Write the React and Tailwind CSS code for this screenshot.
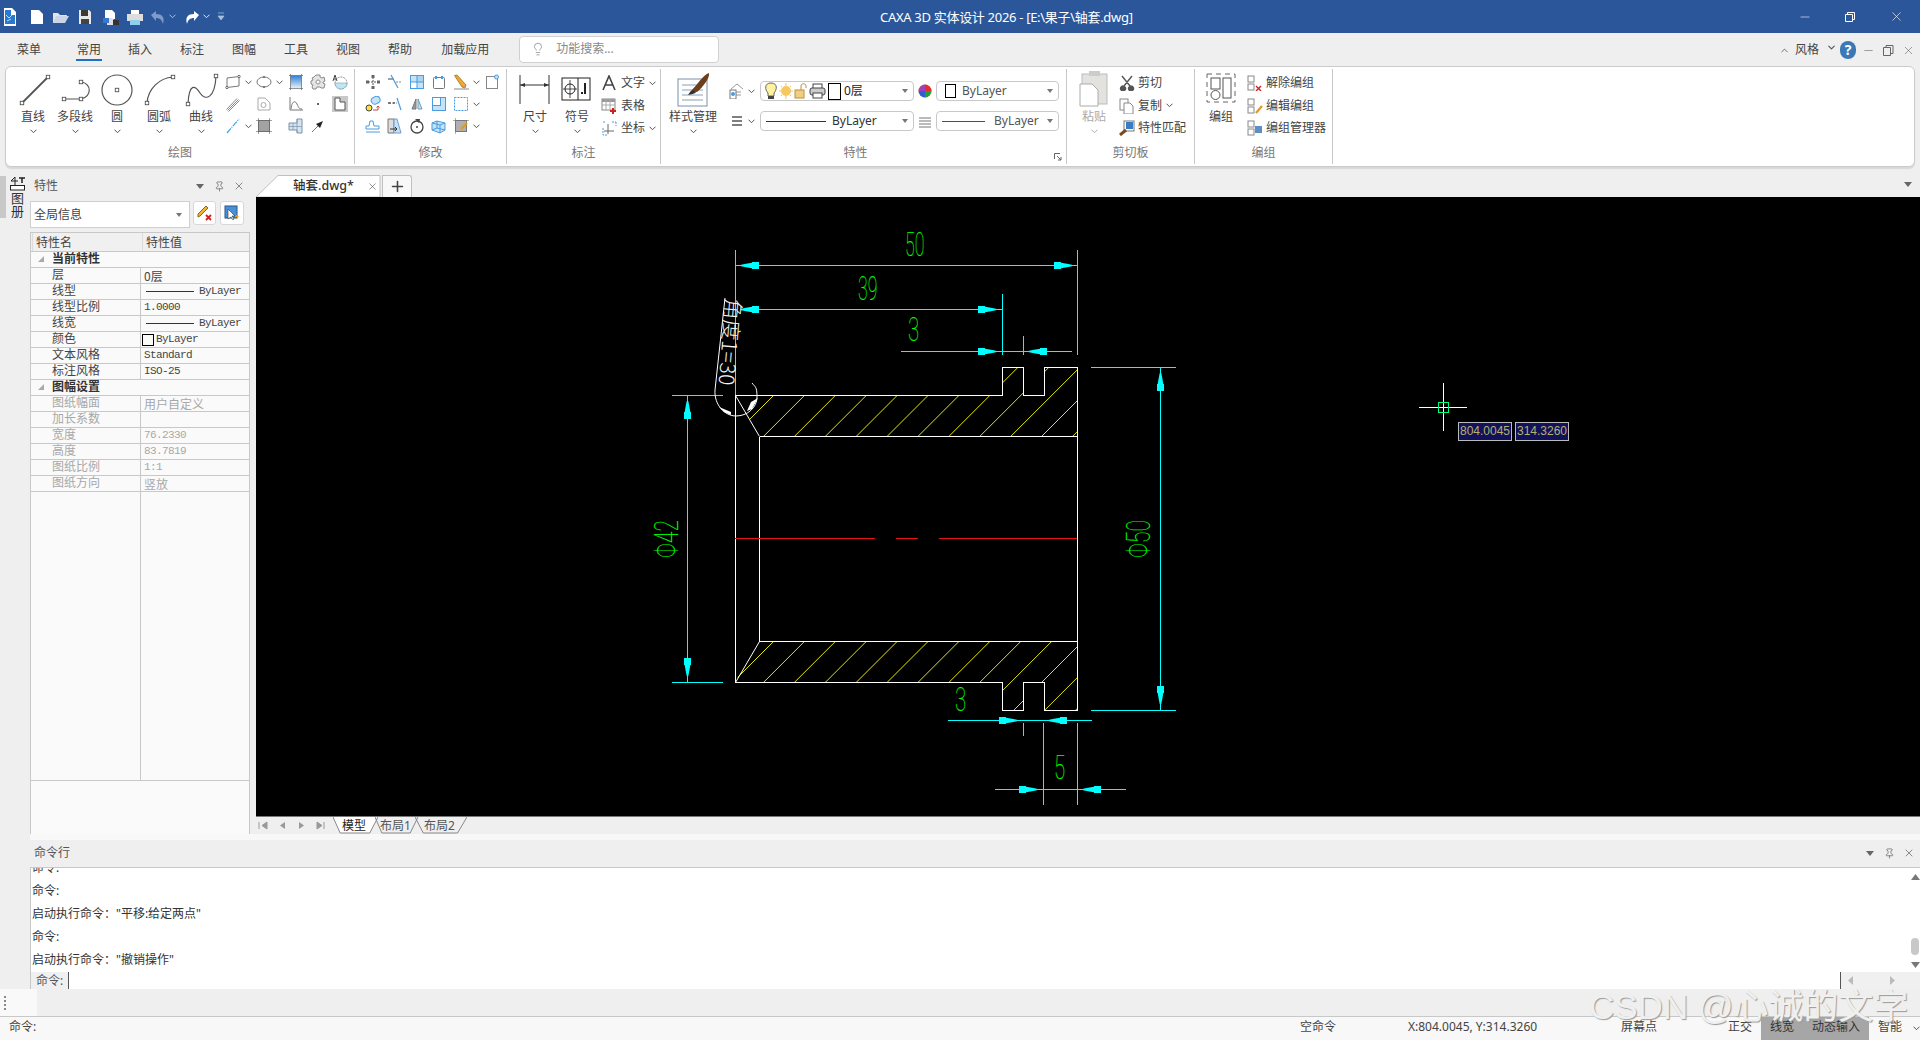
import { X, Minus, ChevronDown, ChevronUp, Pin, Plus, Lightbulb } from "lucide-react";

const DARK = "#555";
const BLUE = "#4a9be0";
const LB = "#c5e3f6";

function Chev({ className = "", color = "#555" }) {
  return (
    <svg width="7" height="5" viewBox="0 0 7 5" className={`shrink-0 ${className}`}>
      <path d="M.5 .7 3.5 3.7 6.5 .7" fill="none" stroke={color} />
    </svg>
  );
}

function S({ children, w = 16, h = 16, className = "" }) {
  return (
    <svg width={w} height={h} viewBox={`0 0 ${w} ${h}`} className={`shrink-0 ${className}`}>
      {children}
    </svg>
  );
}

const H = ({ x, y, s = 3 }) => <rect x={x - s / 2} y={y - s / 2} width={s} height={s} fill="#fff" stroke="#444" strokeWidth=".8" />;

// small ribbon icons
const ic = {
  rect: <><path d="M2 4 14 2.500V12L2 13.500Z" fill="none" stroke="#777" /><circle cx="2" cy="13.500" r="1.200" fill="#fff" stroke="#666" /><circle cx="14" cy="2.500" r="1.200" fill="#fff" stroke="#666" /></>,
  ellipse: <><ellipse cx="8" cy="8" rx="7" ry="5" fill="none" stroke="#777" /><circle cx="8" cy="3" r="1" fill="#666" /><circle cx="8" cy="13" r="1" fill="#666" /></>,
  hatch: <><defs><linearGradient id="hg" x1="0" y1="0" x2="0" y2="1"><stop offset="0" stopColor="#2f7fd6" /><stop offset="1" stopColor="#e8f3fb" /></linearGradient></defs><rect x="2.500" y="1.500" width="11" height="13" fill="url(#hg)" /><path d="M1 1.500h14M1 14.500h14M2.500 0v16M13.500 0v16" stroke="#666" strokeWidth=".7" /></>,
  gear: <path d="M6 1h4v2l2 1 2-1 1 4-2 1v1l2 1-1 4h-3l-1-1H7l-1 2H3l-1-2 1-2-2-1V7l2-1-1-2 2-1zM8 6a2 2 0 1 0 .1 0" fill="#e2e4e8" stroke="#8a8a8a" fillRule="evenodd" />,
  atext: <><circle cx="9" cy="9" r="6" fill="#fff" stroke="#888" strokeDasharray="2 1" /><path d="M9 9h6A6 6 0 0 1 3 9z" fill={LB} stroke="#6aa" strokeWidth=".6" /><path d="M1 7 3 1l2 6M2 5h2" fill="none" stroke="#444" /></>,
  dbl: <path d="M1.500 13.500 12 2.500M3.500 15.500 14.500 4.500M2.500 14.500 13.500 3.500" stroke="#888" strokeWidth="1" />,
  shape: <><path d="M2 2h7l5 5v7H2z" fill="#fff" stroke="#aaa" /><circle cx="7.500" cy="9" r="2.500" fill="none" stroke="#aaa" /></>,
  curve: <path d="M2 1v13h13M3 13c1-8 4-9 6-5s2 5 5 5" fill="none" stroke="#777" />,
  dot: <rect x="7" y="7" width="2" height="2" fill="#666" />,
  page: <><rect width="16" height="16" fill="#c8c8c8" /><path d="M3 2h5v4h5v8H3z" fill="#fff" stroke="#555" /></>,
  cline: <path d="M2 15 14 1" stroke="#38a8ec" strokeWidth="1.2" strokeDasharray="6 1 1 1" />,
  ghatch: <><rect x="2.500" y="2.500" width="11" height="11" fill="#a2a2a2" stroke="#777" /><path d="M0 2.500h16M0 13.500h16M2.500 0v16M13.500 0v16" stroke="#666" strokeWidth=".6" /></>,
  block: <><path d="M1 5h8V1h5v14H9v-3H1z" fill="#d5e4f1" stroke="#7f92a8" /><path d="M1 8.500h13M5 5v7M9 1v14" stroke="#7f92a8" strokeWidth=".7" /></>,
  pick: <><path d="M2 14 8 8" stroke="#777" /><path d="M13 3 6 6l4 4z" fill="#222" /></>,
  move: <><path d="M8 3v10M3 8h10" stroke="#555" strokeDasharray="2 1" /><rect x="6.500" y="1" width="3" height="3" fill="#666" /><rect x="6.500" y="12" width="3" height="3" fill="#666" /><rect x="1" y="6.500" width="3" height="3" fill="#666" /><rect x="12" y="6.500" width="3" height="3" fill="#666" /></>,
  trim: <><path d="M1 5h6" stroke="#444" /><path d="M9 8h6" stroke="#888" strokeDasharray="2 1" /><path d="M4 1 11 14" stroke={BLUE} strokeWidth="1.2" /></>,
  tiles: <><rect x="1.500" y="1.500" width="13" height="13" fill={LB} stroke={BLUE} /><rect x="1.500" y="8" width="6.500" height="6.500" fill="#fff" stroke={BLUE} /><rect x="8" y="1.500" width="6.500" height="6.500" fill="#a9d3f0" stroke={BLUE} /></>,
  ticks: <><rect x="2.500" y="3.500" width="11" height="11" rx="1" fill="#fff" stroke="#777" /><path d="M5 2v3M11 2v3" stroke={BLUE} strokeWidth="2" /></>,
  pencil: <><path d="M1.500 1.500 4 1l9 10-1 3-3-1z" fill="#f2a830" stroke="#9a7015" strokeWidth=".8" /><path d="M10 13l2 1 1-3z" fill="#d88" /><path d="M1 15h15" stroke="#888" /></>,
  note: <><rect x="2.500" y="2.500" width="11" height="12" fill="#fff" stroke="#888" /><circle cx="12.500" cy="3" r="2" fill={LB} stroke={BLUE} /></>,
  circles: <><rect x="6" y="1" width="9" height="7" rx="3.500" transform="rotate(-25 10 4)" fill={LB} stroke={BLUE} /><circle cx="4" cy="12" r="3" fill="#ffe040" stroke="#444" /><path d="M8 14h5V10M11.500 11.500 13 10l1.500 1.500" fill="none" stroke="#c44" /></>,
  cut: <><path d="M1 7h3M6 7h2" stroke="#444" strokeWidth="1.3" /><path d="M10 2 14 14" stroke={BLUE} strokeWidth="1.2" /><path d="M1 7h9" stroke="#888" strokeDasharray="1 1" /></>,
  mirror: <><path d="M7 3v10H3z" fill="#999" stroke="#777" /><path d="M9 3v10h4z" fill={LB} stroke="#69b" /></>,
  half: <><rect x="1.500" y="1.500" width="13" height="13" fill={LB} stroke={BLUE} /><rect x="1.500" y="1.500" width="8" height="8" fill="#fff" stroke={BLUE} /></>,
  dash: <rect x="1.500" y="1.500" width="13" height="13" fill="#fff" stroke={BLUE} strokeDasharray="2 1" />,
  wave: <path d="M1 11h13V8H9L8 3H5L4 8H1zM1 14h14" fill="none" stroke={BLUE} />,
  para: <><path d="M7 1v14H1V1z" fill="#ddd" stroke="#777" /><path d="M7 1h3l4 14H7z" fill={LB} stroke="#79c" /><path d="M3 11h7M8 9l2 2-2 2" fill="none" stroke="#333" /></>,
  rot: <><circle cx="8" cy="9" r="6" fill="none" stroke="#444" strokeWidth="1.3" /><path d="M6 1h5l-1 4z" fill="#444" /><circle cx="8" cy="9" r="1" fill="#444" /></>,
  cube: <><path d="M1 5 6 3l8 2v7l-5 3-8-3z" fill={LB} stroke={BLUE} /><path d="M6 3v7l-5 2M6 10l8 2M9 7v8M1 5l8 2 5-2" stroke={BLUE} fill="none" /></>,
  gpen: <><rect x="2.500" y="2.500" width="11" height="11" fill="#b0b0b0" stroke="#777" /><path d="M0 2.500h16M2.500 0v16" stroke="#777" strokeWidth=".6" /><path d="M8 11 14 5" stroke="#e09a20" strokeWidth="2.200" /></>,
};

function I({ k, chev }) {
  return (
    <div className="h-[22px] flex items-center gap-[4px]">
      <S>{ic[k]}</S>
      {chev && <Chev />}
    </div>
  );
}

function LargeTool({ label, width = "w-[42px]", children, chev = true, disabled }) {
  return (
    <div className={`${width} flex flex-col items-center shrink-0`}>
      <svg width="36" height="36" viewBox="0 0 36 36" className="mt-[2px]">{children}</svg>
      <span className={`mt-[2px] leading-[16px] whitespace-nowrap ${disabled ? "text-[#aaa]" : ""}`}>{label}</span>
      {chev && <Chev className="mt-[4px]" color={disabled ? "#aaa" : "#555"} />}
    </div>
  );
}

function Group({ label, width, children, corner, labelClass = "" }) {
  return (
    <div className={`${width} relative shrink-0 flex flex-col border-r border-[#c8c8c8]`}>
      <div className="h-[74px] flex">{children}</div>
      <div className={`h-[20px] flex items-center justify-center text-[#777] ${labelClass}`}>{label}</div>
      {corner && (
        <S w={8} h={8} className="absolute right-[4px] bottom-[3px]">
          <path d="M.5 6V.5H6M3 3l4 4M7 4v3H4" fill="none" stroke="#666" />
        </S>
      )}
    </div>
  );
}

function Combo({ width, children }) {
  return (
    <div className={`${width} h-[20px] shrink-0 flex items-center bg-white border border-[#c8c8c8] rounded-[4px] pr-[5px]`}>
      {children}
      <svg width="6" height="4" viewBox="0 0 6 4" className="ml-auto"><path d="M0 0h6L3 4z" fill="#777" /></svg>
    </div>
  );
}

function LabelItem({ icon, label, chev }) {
  return (
    <div className="h-[22.5px] flex items-center gap-[2px]">
      <S w={18}>{icon}</S>
      <span className="whitespace-nowrap">{label}</span>
      {chev && <Chev className="ml-[2px]" />}
    </div>
  );
}

function Ribbon() {
  return (
    <div className="h-[101px] mx-[5px] bg-white border border-[#cbcbcb] rounded-[6px] shadow-[0_2px_1px_#d8d8d8] py-[2px] flex shrink-0 text-[12px] text-[#444]">
      <Group label="绘图" width="w-[349px]">
        <div className="w-[6px]" />
        <LargeTool label="直线"><path d="M7 32 33 6" stroke={DARK} strokeWidth="1.8" /><H x={7} y={32} s={3.5} /><H x={33} y={6} s={3.5} /></LargeTool>
        <LargeTool label="多段线"><path d="M7 28H24M24 28C35 26 35 12 24 11" fill="none" stroke={DARK} strokeWidth="1.2" /><H x={7} y={28} s={3.5} /><H x={24} y={28} s={3.5} /><H x={24} y={11} s={3.5} /></LargeTool>
        <LargeTool label="圆"><circle cx="18" cy="19" r="15" fill="none" stroke={DARK} strokeWidth="1.2" /><H x={18} y={19} s={3.5} /></LargeTool>
        <LargeTool label="圆弧"><path d="M6 32C7 18 18 7 32 6" fill="none" stroke={DARK} strokeWidth="1.2" /><H x={6} y={32} s={3.5} /><H x={32} y={6} s={3.5} /></LargeTool>
        <LargeTool label="曲线"><path d="M5 33C6 12 12 14 17 22S32 28 33 5" fill="none" stroke={DARK} strokeWidth="1.2" /><H x={5} y={33} s={3.5} /><H x={33} y={5} s={3.5} /></LargeTool>
        <div className="grid grid-cols-[28px_35px_22px_22px_22px] grid-rows-[22px_22px_22px] pl-[3px] mt-[2px] h-[68px]">
          {[["rect", 1], ["ellipse", 1], ["hatch"], ["gear"], ["atext"], ["dbl"], ["shape"], ["curve"], ["dot"], ["page"], ["cline", 1], ["ghatch"], ["block"], ["pick"]].map(([k, c], i) => (
            <div key={i} className={i === 1 || i === 6 || i === 11 ? "pl-[3px]" : ""}><I k={k} chev={c} /></div>
          ))}
        </div>
      </Group>
      <Group label="修改" width="w-[152px]">
        <div className="grid grid-cols-[22px_22px_22px_22px_31px_22px] grid-rows-[22px_22px_22px] pl-[10px] mt-[2px] h-[68px]">
          {[["move"], ["trim"], ["tiles"], ["ticks"], ["pencil", 1], ["note"], ["circles"], ["cut"], ["mirror"], ["half"], ["dash", 1], [], ["wave"], ["para"], ["rot"], ["cube"], ["gpen", 1]].map(([k, c], i) => (k ? <I key={i} k={k} chev={c} /> : <div key={i} />))}
        </div>
      </Group>
      <Group label="标注" width="w-[154px]">
        <div className="w-[7px]" />
        <LargeTool label="尺寸"><path d="M3 4v29M32 4v29M3 14h29" stroke="#333" fill="none" /><path d="M3 14l5-2v4zM32 14l-5-2v4z" fill="#333" /></LargeTool>
        <LargeTool label="符号"><rect x="3" y="7" width="28" height="22" fill="#fff" stroke="#222" /><path d="M19 7v22" stroke="#222" /><circle cx="11" cy="18" r="5" fill="none" stroke="#222" /><path d="M11 9v18M4 18h14" stroke="#222" strokeWidth=".8" /><path d="M22 22h2M26 12v11" stroke="#222" strokeWidth="2" /></LargeTool>
        <div className="ml-[3px] mt-[3px] flex flex-col">
          <LabelItem label="文字" chev icon={<path d="M2 15 8 1l6 14M4 10h8" fill="none" stroke="#444" strokeWidth="1.6" />} />
          <LabelItem label="表格" icon={<><rect x="1" y="1" width="13" height="11" fill="#fff" stroke="#888" /><rect x="1" y="1" width="13" height="3" fill="#999" /><path d="M5 1v11M9 1v11M1 7h13" stroke="#aaa" /><path d="M12 10v6M9 13h6" stroke="#d02020" strokeWidth="2" /></>} />
          <LabelItem label="坐标" chev icon={<><path d="M7 4v10M3 11h10" stroke="#666" fill="none" /><path d="M2 8v7h5M11 2h4M2 2h3M15 2v4" stroke={BLUE} fill="none" strokeDasharray="2 1" /></>} />
        </div>
      </Group>
      <Group label="特性" width="w-[406px]" corner labelClass="pr-[16px]">
        <div className="w-[11px]" />
        <LargeTool label="样式管理">
          <rect x="3" y="8" width="29" height="27" fill="#fff" stroke="#7c8fa8" />
          <path d="M7 14h21M7 19h21M7 24h21M7 29h21" stroke="#8aa0b8" />
          <path d="M16 20C22 14 28 4 34 2c1 5-6 14-12 19z" fill="#6b3f1c" />
          <path d="M15 21c2-2 5-1 6 0-1 2-5 2-8 3z" fill="#333" />
        </LargeTool>
        <div className="ml-[14px] flex flex-col">
          <div className="flex items-center h-[20px] mt-[12px]">
            <S w={18}><path d="M3 6 9 1l6 5M5 9h8M6 12h7" stroke="#999" fill="none" /><rect x="2" y="7" width="6" height="9" fill="#fff" stroke="#777" /><circle cx="5" cy="11" r="2" fill={BLUE} /></S>
            <Chev className="ml-[2px] mr-[5px]" />
            <Combo width="w-[154px]">
              <div className="pl-[3px] flex items-center gap-[1px] h-full">
                <S w={14} h={18}><path d="M7 1c-7 0-6 7-3 10v3h6v-3c3-3 4-10-3-10z" fill="#fff2a0" stroke="#666" /><rect x="4" y="14" width="6" height="3" fill="#444" /></S>
                <S w={14} h={16}><circle cx="7" cy="8" r="5" fill="#f8c860" /><path d="M7 0v3M7 13v3M0 8h2M12 8h2M2 3l1 1M11 12l1 1M12 3l-1 1M3 12l-1 1" stroke="#f0c060" /></S>
                <S w={14}><rect x="1" y="7" width="9" height="8" fill="#f0d080" stroke="#b89040" /><path d="M7 7V3c0-3 5-3 5 0v2" fill="none" stroke="#b89040" /></S>
                <S w={17}><rect x="4" y="1" width="9" height="5" fill="#fff" stroke="#444" /><rect x="1" y="5" width="15" height="7" rx="2" fill="#ccc" stroke="#444" /><rect x="4" y="10" width="9" height="5" fill="#fff" stroke="#444" /></S>
                <div className="w-[13px] h-[17px] border border-black bg-white ml-[1px]" />
                <span className="ml-[2px] text-[#222]">0层</span>
              </div>
            </Combo>
            <S w={14} h={18} className="mx-[4px]"><circle cx="7" cy="9" r="6.5" fill="#f0b000" /><path d="M7 9V2.500A6.500 6.500 0 0 1 13.500 9z" fill="#e03030" /><path d="M7 9h6.500A6.500 6.500 0 0 1 7 15.500z" fill="#20a040" /><path d="M7 9v6.500A6.500 6.500 0 0 1 .5 9z" fill="#3060d0" /><path d="M7 9H.5A6.500 6.500 0 0 1 7 2.500z" fill="#a040c0" /></S>
            <Combo width="w-[123px]">
              <div className="w-[11px] h-[14px] border border-black bg-white ml-[8px]" />
              <span className="ml-[6px] text-[#555]">ByLayer</span>
            </Combo>
          </div>
          <div className="flex items-center h-[20px] mt-[10px]">
            <S w={18}><path d="M4 4h10M4 8h10M4 12h10" stroke="#555" strokeWidth="1.5" /></S>
            <Chev className="ml-[2px] mr-[5px]" />
            <Combo width="w-[154px]">
              <div className="w-[60px] h-px bg-[#333] ml-[5px]" />
              <span className="ml-[6px] text-[#333]">ByLayer</span>
            </Combo>
            <S w={14} h={18} className="mx-[4px]"><path d="M1 6h12M1 9h12M1 12h12M1 15h12" stroke="#777" /></S>
            <Combo width="w-[123px]">
              <div className="w-[43px] h-px bg-[#e01010] ml-[5px]" />
              <span className="ml-[9px] text-[#555]">ByLayer</span>
            </Combo>
          </div>
        </div>
      </Group>
      <Group label="剪切板" width="w-[128px]">
        <div className="w-[6px]" />
        <LargeTool label="粘贴" width="w-[42px]" disabled>
          <rect x="6" y="3" width="25" height="30" fill="#e4e2de" stroke="#bbb" /><rect x="13" y="0" width="11" height="5" fill="#ccc" /><path d="M4 13h12l6 6v16H4z" fill="#fff" stroke="#aaa" />
        </LargeTool>
        <div className="ml-[3px] mt-[3px] flex flex-col">
          <LabelItem label="剪切" icon={<path d="M4 1l8 10M14 1 6 11M5 11a2.500 2.500 0 1 0 .1 0M13 11a2.500 2.500 0 1 0 .1 0" fill="#555" stroke="#555" strokeWidth="1.4" />} />
          <LabelItem label="复制" chev icon={<><rect x="2" y="1" width="8" height="11" fill="#fff" stroke="#888" /><path d="M6 5h6l3 3v8H6z" fill="#fff" stroke="#888" /></>} />
          <LabelItem label="特性匹配" icon={<><rect x="6" y="1" width="10" height="10" fill="#fff" stroke="#777" /><rect x="8" y="2" width="7" height="7" fill="#3a7cc4" /><path d="M2 15l6-5" stroke="#7a4a20" strokeWidth="3" /></>} />
        </div>
      </Group>
      <Group label="编组" width="w-[138px]">
        <div className="w-[5px]" />
        <LargeTool label="编组" chev={false}>
          <rect x="4" y="3" width="28" height="28" fill="none" stroke="#666" strokeDasharray="5 4" />
          <rect x="8" y="7" width="9" height="11" fill="#fff" stroke="#555" /><circle cx="12.500" cy="24" r="4.500" fill="#fff" stroke="#555" /><rect x="20" y="7" width="8" height="20" fill="#fff" stroke="#555" />
        </LargeTool>
        <div className="ml-[4px] mt-[3px] flex flex-col">
          <LabelItem label="解除编组" icon={<><rect x="2" y="1" width="6" height="6" fill="#fff" stroke="#888" /><rect x="2" y="9" width="6" height="6" fill="#fff" stroke="#888" /><path d="M10 11l5 5M15 11l-5 5" stroke="#d02020" strokeWidth="1.4" /></>} />
          <LabelItem label="编辑编组" icon={<><rect x="2" y="1" width="6" height="6" fill="#fff" stroke="#888" /><rect x="2" y="9" width="6" height="6" fill="#fff" stroke="#888" /><path d="M10 15l6-7" stroke="#e09a20" strokeWidth="2.200" /></>} />
          <LabelItem label="编组管理器" icon={<><rect x="2" y="1" width="6" height="6" fill="#fff" stroke="#888" /><rect x="2" y="9" width="6" height="6" fill="#fff" stroke="#888" /><rect x="9" y="6" width="7" height="7" fill="#5b8fc8" /></>} />
        </div>
      </Group>
    </div>
  );
}

function TitleBar() {
  return (
    <div className="h-[33px] shrink-0 bg-[#2b579a] flex items-center text-white relative">
      <S w={14} h={20} className="ml-[3px]"><path d="M1 1h8l4 4v14H1z" fill="#fff" /><path d="M2 3h6v5h4v9H2z" fill="#2a78d0" /><path d="M3 8l3 3 3-3M4 14l4-2" stroke="#bde" fill="none" /></S>
      <S className="ml-[12px]"><path d="M2 1h8l4 4v10H2z" fill="#fff" /></S>
      <S className="ml-[7px]" w={17}><path d="M1 4h5l2 2h7l-3 8H1z" fill="#e4e4e4" /><path d="M1 14 4 7h13l-4 7z" fill="#c9d5e6" /></S>
      <S className="ml-[8px]"><path d="M2 1h10l2 2v12H2z" fill="#e8e8e8" /><rect x="4" y="1" width="7" height="6" fill="#3a3a3a" /><rect x="4" y="10" width="8" height="5" fill="#444" /></S>
      <S className="ml-[9px]" w={18}><path d="M3 1h7l3 3v6H3z" fill="#fff" /><path d="M5 9h5l2 2v6H5z" fill="#dde" /><rect x="11" y="11" width="6" height="6" fill="#333" /><rect x="1" y="9" width="6" height="5" fill="#3a78c8" /></S>
      <S className="ml-[6px]" w={18}><rect x="5" y="1" width="8" height="5" fill="#fff" /><rect x="1" y="5" width="16" height="7" fill="#ddd" /><rect x="4" y="11" width="10" height="5" fill="#8fd0ef" /></S>
      <S className="ml-[6px]"><path d="M1 6 6 2v3c6 0 9 3 7 10-1-4-3-6-7-6v3z" fill="#7f9cc8" /></S>
      <Chev className="ml-[3px]" color="#a9c0e0" />
      <S className="ml-[8px]"><path d="M15 6 10 2v3C4 5 1 8 3 15c1-4 3-6 7-6v3z" fill="#fff" /></S>
      <Chev className="ml-[3px]" color="#dfe8f5" />
      <S w={8} h={10} className="ml-[7px]"><path d="M1 1h6M1 4h6L4 8z" fill="#a9c0e0" stroke="#a9c0e0" strokeWidth=".7" /></S>
      <div className="absolute left-[880px] top-[8px] text-[13px] tracking-[-0.3px] leading-[18px] whitespace-nowrap">CAXA 3D 实体设计 2026 - [E:\果子\轴套.dwg]</div>
      <div className="ml-auto flex items-center">
        <Minus size={14} strokeWidth={1} className="mr-[32px]" />
        <S w={12} h={12} className="mr-[33px]"><path d="M1.500 3.500h7v7h-7zM3.500 3V1.500h7v7H9" fill="none" stroke="#fff" /></S>
        <X size={15} strokeWidth={1} className="mr-[16px]" />
      </div>
    </div>
  );
}

function TabRow() {
  const tabs = [["菜单", "ml-[17px]"], ["常用", "ml-[36px]"], ["插入", "ml-[27px]"], ["标注", "ml-[28px]"], ["图幅", "ml-[28px]"], ["工具", "ml-[28px]"], ["视图", "ml-[28px]"], ["帮助", "ml-[28px]"], ["加载应用", "ml-[29px]"]];
  return (
    <div className="h-[33px] shrink-0 flex items-center text-[12px] text-[#444]">
      {tabs.map(([t, m]) => (
        <div key={t} className={`${m} relative`}>
          {t}
          {t === "常用" && <div className="absolute left-[-1px] right-[-1px] top-[18px] h-[2px] bg-[#1f6fc4]" />}
        </div>
      ))}
      <div className="ml-[30px] w-[200px] h-[27px] bg-white border border-[#d0d0d0] rounded-[4px] flex items-center mt-[-1px] text-[#888]">
        <Lightbulb size={14} strokeWidth={1} className="ml-[11px] text-[#666]" />
        <span className="ml-[11px]">功能搜索...</span>
      </div>
      <div className="ml-auto flex items-center mt-[1px]">
        <ChevronUp size={11} className="text-[#666]" />
        <span className="ml-[5px]">风格</span>
        <ChevronDown size={11} strokeWidth={2.5} className="ml-[7px] text-[#555] mt-[-6px]" />
        <div className="ml-[3px] w-[16px] h-[18px] rounded-full bg-[#3c78b5] text-white text-[14px] font-bold flex items-center justify-center leading-none">?</div>
        <Minus size={13} strokeWidth={1} className="ml-[6px] text-[#555]" />
        <S w={11} h={11} className="ml-[8px]"><path d="M.5 2.500h7v8h-7zM3 2V.5h7v8H8" fill="none" stroke="#666" /></S>
        <X size={13} strokeWidth={1} className="ml-[8px] mr-[5px] text-[#555]" />
      </div>
    </div>
  );
}

function PaneIcons() {
  return (
    <div className="flex items-center">
      <svg width="8" height="5" viewBox="0 0 8 5"><path d="M0 0h8L4 5z" fill="#666" /></svg>
      <Pin size={11} strokeWidth={1.4} className="ml-[10px] text-[#555]" />
      <X size={12} strokeWidth={1.5} className="ml-[8px] text-[#666]" />
    </div>
  );
}

function LineVal() {
  return (
    <span className="flex items-center ml-[2px]">
      <span className="w-[48px] h-px bg-[#333] mr-[5px]" />
      ByLayer
    </span>
  );
}

const cjkVal = "font-['Noto_Sans_CJK_SC'] tracking-normal text-[12px]";
const rows = [
  { g: "当前特性" },
  { n: "层", v: <span className={cjkVal}>0层</span> },
  { n: "线型", v: <LineVal /> },
  { n: "线型比例", v: "1.0000" },
  { n: "线宽", v: <LineVal /> },
  { n: "颜色", v: <span className="flex items-center -ml-[2px]"><span className="w-[12px] h-[12px] border border-black mr-[2px]" />ByLayer</span> },
  { n: "文本风格", v: "Standard" },
  { n: "标注风格", v: "ISO-25" },
  { g: "图幅设置" },
  { n: "图纸幅面", v: <span className={cjkVal}>用户自定义</span>, d: 1 },
  { n: "加长系数", v: "", d: 1 },
  { n: "宽度", v: "76.2330", d: 1 },
  { n: "高度", v: "83.7819", d: 1 },
  { n: "图纸比例", v: "1:1", d: 1 },
  { n: "图纸方向", v: <span className={cjkVal}>竖放</span>, d: 1 },
];

function PropsPanel() {
  return (
    <div className="w-[220px] shrink-0 flex flex-col text-[12px] text-[#444]">
      <div className="h-[34px] flex items-center justify-between pl-[4px] pr-[5px] pt-[4px]">
        <span className="text-[#555]">特性</span>
        <PaneIcons />
      </div>
      <div className="flex h-[27px]">
        <div className="w-[160px] h-[27px] bg-white border border-[#cfcfcf] flex items-center pl-[3px] pr-[7px]">
          全局信息
          <svg width="6" height="4" viewBox="0 0 6 4" className="ml-auto"><path d="M0 0h6L3 4z" fill="#777" /></svg>
        </div>
        <div className="ml-[3px] w-[23px] h-[24px] border border-[#d8d8d8] rounded-[3px] bg-white flex items-center justify-center">
          <S><path d="M1 9 9 1l2 2-8 8-2 1z" fill="#f0b530" stroke="#8a6a10" /><path d="M9 10l5 5M14 10l-5 5" stroke="#d02020" strokeWidth="1.800" /></S>
        </div>
        <div className="ml-[4px] w-[24px] h-[24px] border border-[#d8d8d8] rounded-[3px] bg-white flex items-center justify-center">
          <S><rect x="1" y="1" width="12" height="12" fill="#4a90d8" stroke="#24558a" /><path d="M4 4v10l3-2 2 3 1-1-2-3h3z" fill="#fff" stroke="#333" strokeWidth=".6" /><path d="M14 8l-3 4h2l-1 3 3-4h-2z" fill="#f0a020" /></S>
        </div>
      </div>
      <div className="mt-[4px] h-[602px] bg-[#fafafa] border border-[#c8c8c8] flex flex-col">
        <div className="h-[19px] flex border-b border-[#c8c8c8] bg-[#f0f0f0] shrink-0">
          <div className="w-[111px] pl-[3px] ml-[1px] border-x border-[#dcdcdc] leading-[19px]">特性名</div>
          <div className="pl-[3px] leading-[19px]">特性值</div>
        </div>
        <div className="relative flex-1 flex flex-col">
          {rows.map((r, i) =>
            r.g ? (
              <div key={i} className="h-[16px] shrink-0 flex items-center border-b border-[#c8c8c8] leading-none pb-[1px]">
                <svg width="6" height="6" viewBox="0 0 6 6" className="ml-[7px] mr-[8px]"><path d="M6 0v6H0z" fill="#aaa" /></svg>
                <span className="font-bold text-[#333]">{r.g}</span>
              </div>
            ) : (
              <div key={i} className={`h-[16px] shrink-0 flex items-center border-b border-[#c8c8c8] leading-none ${r.d ? "text-[#a8a8a8]" : ""}`}>
                <div className="w-[110px] h-full pl-[21px] pb-[1px] flex items-center border-r border-[#c8c8c8] shrink-0">{r.n}</div>
                <div className="pl-[3px] h-full flex items-center font-['Liberation_Mono'] text-[11px] tracking-[-0.6px]">{r.v}</div>
              </div>
            )
          )}
          <div className="flex-1 flex min-h-0">
            <div className="w-[110px] border-r border-[#c8c8c8] h-[292px]" />
          </div>
          <div className="absolute left-0 right-0 top-[528px] h-[54px] bg-[#fafafa] border-t border-[#c8c8c8]" />
        </div>
      </div>
    </div>
  );
}

function Arrow({ x, y, d }) {
  const t = { r: [1, 0], l: [-1, 0], u: [0, -1], dn: [0, 1] }[d];
  const pt = (a, b) => `${x + a * t[0] - b * t[1]},${y + a * t[1] + b * t[0]}`;
  const p = [pt(0, -3.5), pt(7, -3.5), pt(7, -2.8), pt(13, -1.8), pt(18, -0.8), pt(18, 0.8), pt(13, 1.8), pt(7, 2.8), pt(7, 3.5), pt(0, 3.5)].join(" ");
  return <polygon points={p} fill="#00ffff" />;
}

function CadText({ x, y, sx = 0.52, rot, children }) {
  return (
    <text transform={`translate(${x},${y}) ${rot ? "rotate(-90)" : ""} scale(${sx},1)`} fontFamily="Roboto" fontWeight="100" fontSize="34" fill="#00ff00" stroke="#00ff00" strokeWidth=".15">
      {children}
    </text>
  );
}

const cyanLines = [
  [735.5, 250, 735.5, 395], [1077.5, 250, 1077.5, 355], [735, 265.5, 1077, 265.5], [741, 309.5, 1002, 309.5], [1002.5, 294, 1002.5, 355],
  [901, 351.5, 1072, 351.5], [1023.5, 336, 1023.5, 355], [672, 395.5, 723, 395.5], [687.5, 395, 687.5, 682], [672, 682.5, 723, 682.5],
  [1091, 367.5, 1176, 367.5], [1160.5, 367, 1160.5, 710], [1091, 710.5, 1176, 710.5], [948, 720.5, 1092, 720.5], [1023.5, 723, 1023.5, 736],
  [1043.5, 723, 1043.5, 805], [1077.5, 723, 1077.5, 805], [995, 789.5, 1126, 789.5],
];
const hatchX = Array.from({ length: 14 }, (_, i) => 733 + i * 30.9);

function Drawing() {
  return (
    <svg width="1664" height="620" viewBox="256 197 1664 620" className="block">
      <defs>
        <clipPath id="up"><polygon points="735,395 1002,395 1002,367 1023,367 1023,395 1044,395 1044,367 1077,367 1077,436 759,436" /></clipPath>
        <clipPath id="lo"><polygon points="759,641 1077,641 1077,710 1044,710 1044,682 1023,682 1023,710 1002,710 1002,682 735,682" /></clipPath>
      </defs>
      <g clipPath="url(#up)" stroke="#ffff00" strokeWidth=".9">
        {hatchX.map((x) => <line key={x} x1={x} y1="436" x2={x + 90} y2="346" />)}
      </g>
      <g clipPath="url(#lo)" stroke="#ffff00" strokeWidth=".9">
        {hatchX.map((x) => <line key={x} x1={x - 30} y1="712" x2={x + 90} y2="592" />)}
      </g>
      <g fill="none" stroke="#fff" shapeRendering="crispEdges">
        <path d="M735.5 395.5H1002.5V367.5H1023.5V395.5H1044.5V367.5H1077.5V710.5H1044.5V682.5H1023.5V710.5H1002.5V682.5H735.5Z" />
        <path d="M759.5 436.5H1077.5M759.5 641.5H1077.5M759.5 436.5V641.5" />
      </g>
      <path d="M735.5 395.5 759.5 436.5M735.5 682.5 759.5 641.5" stroke="#fff" />
      <path d="M735 538.5H875M896 538.5H918M939 538.5H1077" stroke="#e81010" shapeRendering="crispEdges" />
      <g stroke="#00ffff" shapeRendering="crispEdges">
        {cyanLines.map(([a, b, c, e], i) => <line key={i} x1={a} y1={b} x2={c} y2={e} />)}
      </g>
      <Arrow x={759} y={265.5} d="l" /><Arrow x={1054} y={265.5} d="r" />
      <Arrow x={759} y={309.5} d="l" /><Arrow x={978} y={309.5} d="r" />
      <Arrow x={978} y={351.5} d="r" /><Arrow x={1047} y={351.5} d="l" />
      <Arrow x={687.5} y={419} d="u" /><Arrow x={687.5} y={658} d="dn" />
      <Arrow x={1160.5} y={391} d="u" /><Arrow x={1160.5} y={686} d="dn" />
      <Arrow x={999} y={720.5} d="r" /><Arrow x={1067} y={720.5} d="l" />
      <Arrow x={1019} y={789.5} d="r" /><Arrow x={1101} y={789.5} d="l" />
      <CadText x={905} y={256}>50</CadText>
      <CadText x={858} y={300}>39</CadText>
      <CadText x={908} y={341} sx={0.6}>3</CadText>
      <CadText x={955} y={711} sx={0.6}>3</CadText>
      <CadText x={1054} y={779} sx={0.6}>5</CadText>
      <CadText x={678} y={558} sx={0.62} rot>Φ42</CadText>
      <CadText x={1150} y={558} sx={0.62} rot>Φ50</CadText>
      <path d="M725 298 715 390C714 405 725 416 736 416S757 408 757 397 755 387 752 383" fill="none" stroke="#fff" />
      <polygon points="758,398 751,402 747,411 752,409" fill="#fff" />
      <polygon points="719,407 731,412 731,415 724,412" fill="#fff" />
      <text transform="translate(726,298) rotate(95)" fontFamily="'Noto Sans CJK SC'" fontWeight="300" fontSize="21" fill="#f4f4f4">角度1=30</text>
      <path d="M1419 407.500H1467M1443.500 383V431" stroke="#fff" shapeRendering="crispEdges" />
      <rect x="1438.5" y="402.5" width="10" height="10" fill="none" stroke="#00ff80" shapeRendering="crispEdges" />
    </svg>
  );
}

function DynInput({ text, className }) {
  return <div className={`absolute top-[225px] h-[19px] w-[54px] bg-[#12125a] border border-[#bbb] text-[#b5b070] text-[12px] leading-[17px] text-center font-['Liberation_Sans'] ${className}`}>{text}</div>;
}

function LayoutTab({ w, label, active, textPad }) {
  return (
    <div className={`relative h-[17px] ${w} -mr-[3px] shrink-0`}>
      <svg className="absolute inset-0 w-full h-full" viewBox="0 0 44 17" preserveAspectRatio="none">
        <path d="M0 0 7 16H36L44 0" fill={active ? "#fff" : "none"} stroke="#888" vectorEffect="non-scaling-stroke" />
      </svg>
      <span className={`relative ${textPad} leading-[17px] block ${active ? "text-[#222]" : "text-[#555]"}`}>{label}</span>
    </div>
  );
}

function DocArea() {
  return (
    <div className="flex-1 ml-[6px] min-w-0 flex flex-col text-[12px] text-[#444]">
      <div className="h-[30px] shrink-0 flex items-end relative">
        <div className="relative w-[125px] h-[22px] shrink-0">
          <svg className="absolute inset-0" width="125" height="22" viewBox="0 0 125 22"><path d="M0 22 22 .5H124V22Z" fill="#fff" stroke="#c0c0c0" /></svg>
          <div className="relative h-full pl-[37px] flex items-center font-medium text-[12.5px] text-[#333] leading-none">
            轴套.dwg*
            <X size={11} strokeWidth={1.5} className="ml-[13px] text-[#666]" />
          </div>
        </div>
        <div className="w-[30px] h-[22px] ml-px bg-[#f8f8f8] border border-b-0 border-[#c0c0c0] rounded-tr-[3px] flex items-center justify-center">
          <Plus size={17} strokeWidth={2.2} className="text-[#444]" />
        </div>
        <svg width="8" height="5" viewBox="0 0 8 5" className="ml-auto mr-[8px] mb-[10px]"><path d="M0 0h8L4 5z" fill="#666" /></svg>
      </div>
      <div className="relative h-[620px] bg-black border-b border-[#777] shrink-0">
        <Drawing />
        <DynInput text="804.0045" className="left-[1202px]" />
        <DynInput text="314.3260" className="left-[1259px]" />
      </div>
      <div className="h-[17px] shrink-0 flex items-center">
        <div className="w-[77px] flex items-center pl-[2px] shrink-0">
          <S w={12} h={9} className="mr-[7px]"><path d="M1 1v7M9 1 4 4.500l5 3.500z" fill="#999" stroke="#999" /></S>
          <S w={12} h={9} className="mr-[7px]"><path d="M8 1 3 4.500 8 8z" fill="#999" /></S>
          <S w={12} h={9} className="mr-[7px]"><path d="M3 1 8 4.500 3 8z" fill="#999" /></S>
          <S w={12} h={9}><path d="M9 1v7M2 1l5 3.500L2 8z" fill="#999" stroke="#999" /></S>
        </div>
        <LayoutTab w="w-[45px]" label="模型" active textPad="pl-[9px]" />
        <LayoutTab w="w-[43px]" label="布局1" textPad="pl-[5px]" />
        <LayoutTab w="w-[52px]" label="布局2" textPad="pl-[9px]" />
      </div>
    </div>
  );
}

function CommandPanel() {
  const lines = ["命令:", "命令:", "启动执行命令：\"平移:给定两点\"", "命令:", "启动执行命令：\"撤销操作\""];
  return (
    <div className="h-[149px] shrink-0 flex flex-col text-[12px] text-[#333]">
      <div className="h-[28px] shrink-0 flex items-center justify-between pl-[4px] pr-[5px] pb-[1px] border-b border-[#c8c8c8]">
        <span className="text-[#555]">命令行</span>
        <PaneIcons />
      </div>
      <div className="flex-1 flex flex-col bg-white border-l border-[#c8c8c8] min-h-0">
        <div className="h-[104px] shrink-0 flex overflow-hidden">
          <div className="flex-1 pl-[1px] -mt-[12px]">
            {lines.map((l, i) => <div key={i} className="h-[23px] leading-[23px] whitespace-pre">{l}</div>)}
          </div>
          <div className="w-[18px] bg-white flex flex-col items-center pt-[6px] pl-[8px]">
            <svg width="9" height="6" viewBox="0 0 9 6"><path d="M0 6h9L4.500 0z" fill="#777" /></svg>
            <div className="w-[8px] h-[17px] bg-[#c8c8c8] rounded-full mt-[58px]" />
            <svg width="9" height="6" viewBox="0 0 9 6" className="mt-[7px]"><path d="M0 0h9L4.500 6z" fill="#777" /></svg>
          </div>
        </div>
        <div className="h-[17px] flex items-center">
          <div className="w-[37px] h-full bg-[#f0f0f0] pl-[5px] leading-[17px] text-[#555]">命令:</div>
          <div className="w-px h-full bg-[#555]" />
          <div className="flex-1" />
          <div className="w-px h-full bg-[#555]" />
          <div className="w-[79px] h-full bg-[#f0f0f0] flex items-center pl-[7px]">
            <svg width="5" height="9" viewBox="0 0 5 9"><path d="M5 0v9L0 4.500z" fill="#bbb" /></svg>
            <svg width="5" height="9" viewBox="0 0 5 9" className="ml-[37px]"><path d="M0 0v9l5-4.500z" fill="#bbb" /></svg>
          </div>
        </div>
      </div>
    </div>
  );
}

function StatusBar() {
  return (
    <div className="h-[24px] shrink-0 border-t border-[#c8c8c8] bg-[#f8f8f8] flex items-center text-[12px] text-[#444]">
      <span className="ml-[9px] w-[1291px] pb-[3px]">命令:</span>
      <span className="w-[108px] pb-[3px]">空命令</span>
      <span className="w-[213px] pb-[3px]">X:804.0045, Y:314.3260</span>
      <span className="w-[107px] pb-[3px]">屏幕点</span>
      <span className="w-[33px] pb-[3px]">正交</span>
      <div className="w-[108px] h-full bg-[#a6a6a6] flex items-center pl-[9px] pb-[3px] text-[#333]">
        <span className="w-[42px]">线宽</span>
        <span>动态输入</span>
      </div>
      <span className="ml-[9px] pb-[3px]">智能</span>
      <Chev className="ml-[11px]" />
    </div>
  );
}

export default function App() {
  return (
    <div className="relative w-[1920px] h-[1040px] overflow-hidden flex flex-col bg-[#efefef] font-['Noto_Sans','Noto_Sans_CJK_SC',sans-serif]">
      <TitleBar />
      <TabRow />
      <Ribbon />
      <div className="flex flex-1 min-h-0">
        <div className="w-[30px] shrink-0 pt-[9px] flex">
          <div className="w-[6px] h-[42px] bg-[#c8c8c8]" />
          <div className="ml-[4px] flex flex-col items-center w-[15px] text-[13px] leading-[13px] text-[#333]">
            <S w={15} h={15}><path d="M1 5 5 1v8M1 5h7" fill="none" stroke="#222" /><path d="M9 2h6M12 2v5" stroke="#222" strokeWidth="1.5" /><rect x=".5" y="9.500" width="14" height="4.500" fill="#fff" stroke="#222" /></S>
            <span className="mt-[1px]">图</span>
            <span>册</span>
          </div>
        </div>
        <div className="flex-1 min-w-0 flex flex-col">
          <div className="h-[667px] shrink-0 flex">
            <PropsPanel />
            <DocArea />
          </div>
          <div className="h-[6px] shrink-0 bg-[#f8f8f8]" />
          <CommandPanel />
        </div>
      </div>
      <div className="h-[27px] shrink-0 flex">
        <div className="w-[37px] bg-[#f9f9f9] flex flex-col items-start gap-[2px] pl-[4px] justify-center">
          {[0, 1, 2, 3].map((i) => <div key={i} className="w-[2px] h-[2px] bg-[#888]" />)}
        </div>
      </div>
      <StatusBar />
      <div className="absolute left-[1589px] top-[986px] text-[35px] leading-[42px] whitespace-nowrap text-[#f0f0f0] [text-shadow:1px_1px_1px_#999] pointer-events-none font-['Liberation_Sans','Noto_Sans_CJK_SC',sans-serif]">CSDN @心诚的文字</div>
    </div>
  );
}
